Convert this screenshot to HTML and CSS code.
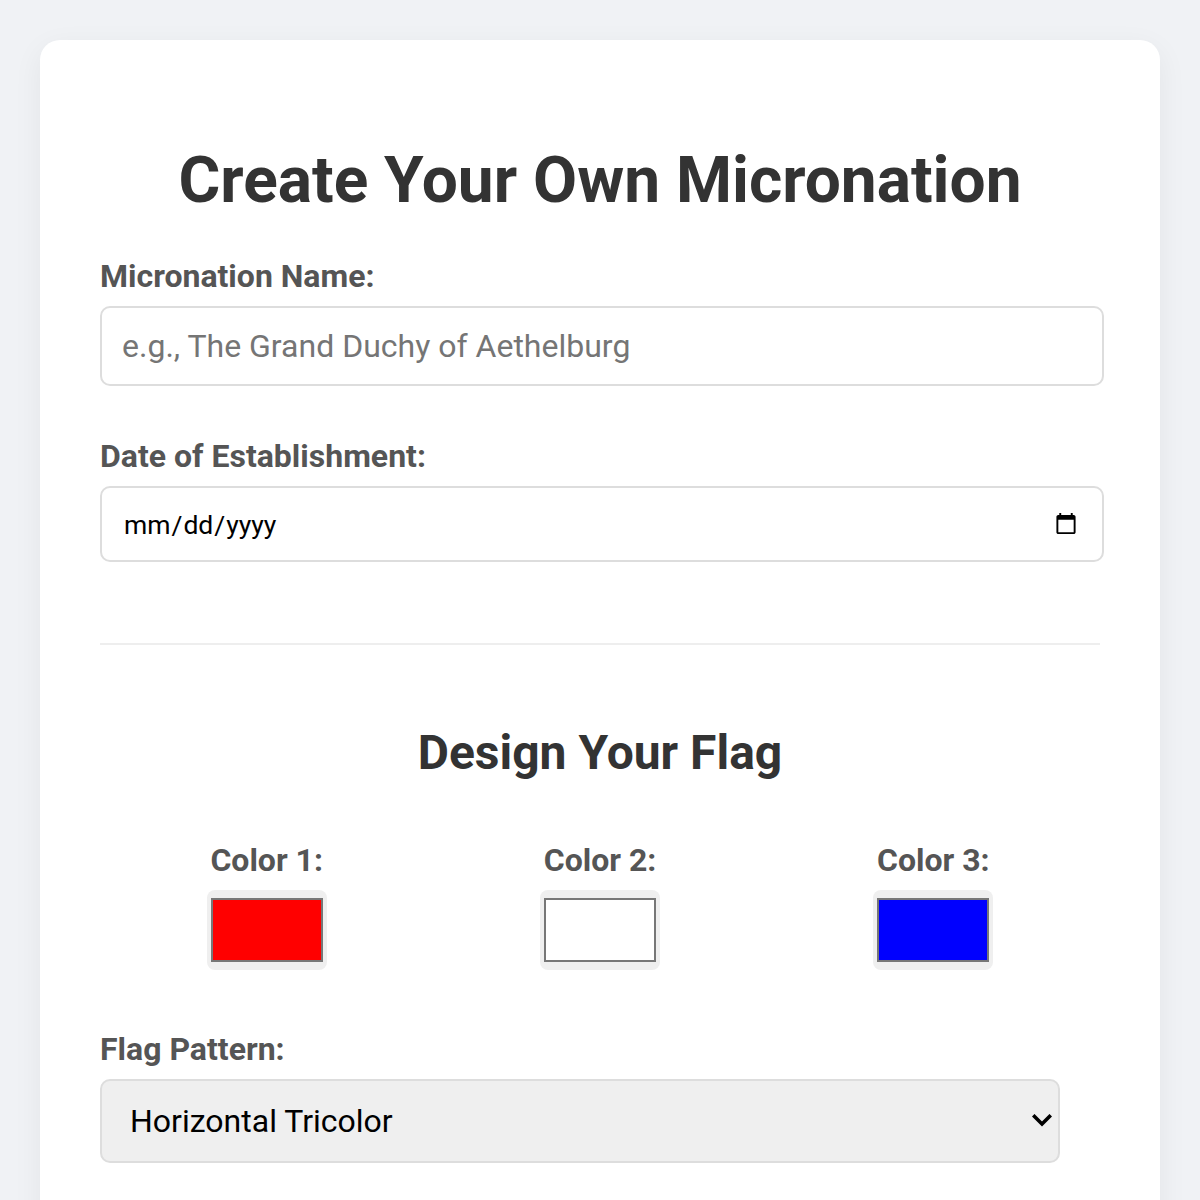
FILE: index.html
```html
<!DOCTYPE html>
<html lang="en">
<head>
<meta charset="utf-8">
<title>Create Your Own Micronation</title>
<link rel="stylesheet" href="styles.css">
</head>
<body>
<main class="card">
  <h1 class="title">Create Your Own Micronation</h1>
  <div class="field">
    <label class="label" for="name">Micronation Name:</label>
    <input class="text-input" id="name" type="text" placeholder="e.g., The Grand Duchy of Aethelburg">
  </div>
  <div class="field">
    <label class="label" for="date">Date of Establishment:</label>
    <input class="text-input date-input" id="date" type="date">
  </div>
  <hr class="divider">
  <h2 class="subtitle">Design Your Flag</h2>
  <div class="colors">
    <div class="color-item">
      <label class="label" for="c1">Color 1:</label>
      <input class="color-input" id="c1" type="color" value="#ff0000">
    </div>
    <div class="color-item">
      <label class="label" for="c2">Color 2:</label>
      <input class="color-input" id="c2" type="color" value="#ffffff">
    </div>
    <div class="color-item">
      <label class="label" for="c3">Color 3:</label>
      <input class="color-input" id="c3" type="color" value="#0000ff">
    </div>
  </div>
  <div class="field">
    <label class="label" for="pattern">Flag Pattern:</label>
    <div class="select-wrap">
      <select class="select" id="pattern">
        <option>Horizontal Tricolor</option>
        <option>Vertical Tricolor</option>
      </select>
      <svg class="chevron" width="20" height="13" viewBox="0 0 20 13" aria-hidden="true">
        <path d="M2.5 2.5 L10 10 L17.5 2.5" fill="none" stroke="#000" stroke-width="3.6" stroke-linecap="square" stroke-linejoin="miter"/>
      </svg>
    </div>
  </div>
</main>
</body>
</html>
```
FILE: styles.css
```css
html, body {
  margin: 0;
  padding: 0;
}
body {
  background: #f0f2f5;
  font-family: Roboto, "Liberation Sans", sans-serif;
  padding: 40px;
}
.card {
  background: #ffffff;
  border-radius: 20px;
  box-shadow: 0 8px 30px rgba(0, 0, 0, 0.06);
  padding: 60px;
  min-height: 1200px;
}
.title {
  font-size: 64px;
  font-weight: 700;
  color: #333333;
  text-align: center;
  margin: 43px 0 39px 0;
  line-height: 75px;
}
.field {
  margin-bottom: 51px;
}
.label {
  display: block;
  font-size: 32px;
  line-height: 38px;
  font-weight: 700;
  color: #555555;
  margin-bottom: 11px;
}
.text-input {
  display: block;
  box-sizing: border-box;
  width: 1004px;
  height: 80px;
  padding: 0 20px;
  border: 2px solid #dddddd;
  border-radius: 10px;
  font-family: Roboto, sans-serif;
  font-size: 32px;
  color: #000;
  background: #fff;
  outline: none;
}
.text-input::placeholder {
  color: #757575;
}
.date-input {
  height: 76px;
  font-size: 26.5px;
  padding: 0 22px 0 21px;
}
.date-input::-webkit-calendar-picker-indicator {
  width: 24px;
  height: 24px;
}
.divider {
  border: none;
  border-top: 2px solid #eeeeee;
  margin: 81px 0 80px 0;
}
.subtitle {
  font-size: 48px;
  font-weight: 700;
  color: #333333;
  text-align: center;
  margin: 0 0 60px 0;
  line-height: 56px;
}
.colors {
  display: grid;
  grid-template-columns: 1fr 1fr 1fr;
  margin-bottom: 60px;
}
.color-item {
  display: flex;
  flex-direction: column;
  align-items: center;
}
.color-input {
  -webkit-appearance: none;
  appearance: none;
  display: block;
  box-sizing: border-box;
  width: 120px;
  height: 80px;
  padding: 0;
  border: none;
  border-radius: 8px;
  background: #efefef;
  cursor: pointer;
}
.color-input::-webkit-color-swatch-wrapper {
  padding: 8px 4px;
}
.color-input::-webkit-color-swatch {
  border: 2px solid #777777;
  border-radius: 0;
}
.select-wrap {
  position: relative;
  width: 960px;
}
.select {
  -webkit-appearance: none;
  appearance: none;
  display: block;
  box-sizing: border-box;
  width: 960px;
  height: 84px;
  padding: 0 60px 0 28px;
  border: 2px solid #dddddd;
  border-radius: 10px;
  background: #efefef;
  font-family: Roboto, sans-serif;
  font-size: 32px;
  color: #000;
  outline: none;
}
.chevron {
  position: absolute;
  right: 8px;
  top: 35px;
  pointer-events: none;
}
```
